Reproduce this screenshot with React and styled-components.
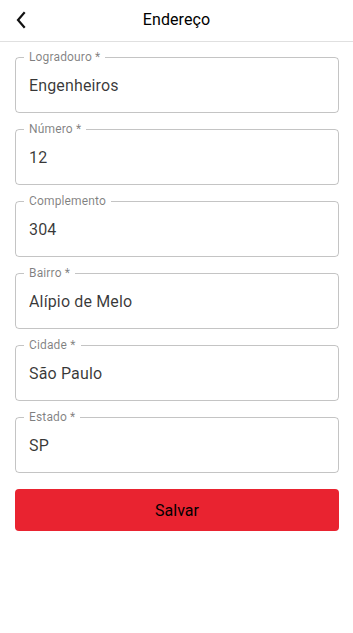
import React from "react";
import styled, { createGlobalStyle } from "styled-components";

const Global = createGlobalStyle`
  * { box-sizing: border-box; }
  body { margin: 0; background: #fff; font-family: Roboto, "Noto Sans", sans-serif; }
`;

const Page = styled.div`
  width: 353px;
  min-height: 633px;
  background: #fff;
`;

const Header = styled.header`
  height: 42px;
  display: flex;
  align-items: center;
  justify-content: center;
  position: relative;
  border-bottom: 1px solid #e0e0e0;
`;

const BackButton = styled.button`
  position: absolute;
  left: 10px;
  top: 8px;
  width: 24px;
  height: 24px;
  padding: 0;
  border: 0;
  background: transparent;
  display: flex;
  align-items: center;
  justify-content: center;
`;

const Title = styled.h1`
  margin: 0;
  margin-top: -3px;
  font-size: 16px;
  font-weight: 400;
  color: #000;
  letter-spacing: 0.1px;
`;

const Form = styled.form`
  display: flex;
  flex-direction: column;
  gap: 16px;
  padding: 15px 14px 0 15px;
`;

const Field = styled.div`
  position: relative;
  height: 56px;
  display: flex;
  align-items: center;
`;

const Outline = styled.fieldset`
  position: absolute;
  inset: -5px 0 0 0;
  margin: 0;
  padding: 0 8px;
  border: 1px solid rgba(0, 0, 0, 0.23);
  border-radius: 4px;
  pointer-events: none;
`;

const Legend = styled.legend`
  padding: 0 5px;
  font-size: 12px;
  line-height: 11px;
  height: 11px;
  color: rgba(0, 0, 0, 0.5);
  font-weight: 400;
  letter-spacing: 0.15px;
`;

const Input = styled.input`
  width: 100%;
  border: 0;
  outline: none;
  background: transparent;
  padding: 16.5px 14px;
  font-family: Roboto, sans-serif;
  font-size: 16px;
  color: rgba(0, 0, 0, 0.78);
  letter-spacing: 0.15px;
  margin-top: 1px;
`;

const SaveButton = styled.button`
  height: 42px;
  border: 0;
  border-radius: 4px;
  background: #e92330;
  color: #000;
  font-family: Roboto, sans-serif;
  font-size: 16px;
  font-weight: 400;
  letter-spacing: 0;
`;

const fields = [
  ["Logradouro *", "Engenheiros"],
  ["Número *", "12"],
  ["Complemento", "304"],
  ["Bairro *", "Alípio de Melo"],
  ["Cidade *", "São Paulo"],
  ["Estado *", "SP"],
];

export default function App() {
  return (
    <Page>
      <Global />
      <Header>
        <BackButton aria-label="Voltar">
          <svg width="24" height="24" viewBox="0 0 24 24" fill="none">
            <path d="M14 5 L8 12 L14 19" stroke="#111" strokeWidth="2.2" strokeLinecap="square" strokeLinejoin="miter" />
          </svg>
        </BackButton>
        <Title>Endereço</Title>
      </Header>
      <Form onSubmit={(e) => e.preventDefault()}>
        {fields.map(([label, value]) => (
          <Field key={label}>
            <Input defaultValue={value} />
            <Outline>
              <Legend>{label}</Legend>
            </Outline>
          </Field>
        ))}
        <SaveButton type="submit">Salvar</SaveButton>
      </Form>
    </Page>
  );
}
